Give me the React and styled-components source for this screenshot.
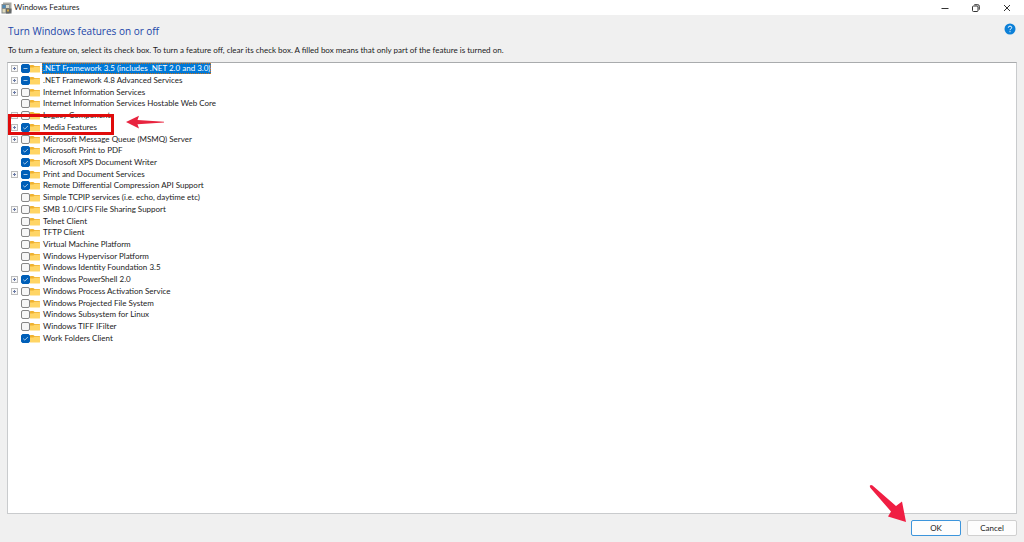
import React, { useEffect, useRef, useState } from "react";
import styled, { createGlobalStyle } from "styled-components";

const features = [
  { name: ".NET Framework 3.5 (includes .NET 2.0 and 3.0)", state: "partial", expandable: true, selected: true },
  { name: ".NET Framework 4.8 Advanced Services", state: "partial", expandable: true },
  { name: "Internet Information Services", state: "off", expandable: true },
  { name: "Internet Information Services Hostable Web Core", state: "off" },
  { name: "Legacy Components", state: "off", expandable: true },
  { name: "Media Features", state: "on", expandable: true, marked: true },
  { name: "Microsoft Message Queue (MSMQ) Server", state: "off", expandable: true },
  { name: "Microsoft Print to PDF", state: "on" },
  { name: "Microsoft XPS Document Writer", state: "on" },
  { name: "Print and Document Services", state: "partial", expandable: true },
  { name: "Remote Differential Compression API Support", state: "on" },
  { name: "Simple TCPIP services (i.e. echo, daytime etc)", state: "off" },
  { name: "SMB 1.0/CIFS File Sharing Support", state: "off", expandable: true },
  { name: "Telnet Client", state: "off" },
  { name: "TFTP Client", state: "off" },
  { name: "Virtual Machine Platform", state: "off" },
  { name: "Windows Hypervisor Platform", state: "off" },
  { name: "Windows Identity Foundation 3.5", state: "off" },
  { name: "Windows PowerShell 2.0", state: "on", expandable: true },
  { name: "Windows Process Activation Service", state: "off", expandable: true },
  { name: "Windows Projected File System", state: "off" },
  { name: "Windows Subsystem for Linux", state: "off" },
  { name: "Windows TIFF IFilter", state: "off" },
  { name: "Work Folders Client", state: "on" },
];

const GlobalStyle = createGlobalStyle`
  * {
    box-sizing: border-box;
  }
  body {
    margin: 0;
    background: #f0f0f0;
    color: #1b1b1b;
    font-family: Lato, "Open Sans", sans-serif;
    font-size: 8px;
  }
  button {
    font: inherit;
    color: inherit;
    padding: 0;
  }
`;

const Window = styled.div`
  display: flex;
  flex-direction: column;
  min-height: 100vh;
`;

const TitleBar = styled.header`
  display: flex;
  align-items: center;
  height: 15px;
  padding: 0 2px 0 1px;
  background: #fff;
`;

const Title = styled.span`
  flex: 1;
  margin-left: 2px;
  line-height: 15px;
`;

const WindowButton = styled.button`
  display: grid;
  place-items: center;
  width: 31px;
  height: 15px;
  border: 0;
  background: none;
`;

const Content = styled.main`
  flex: 1;
  display: flex;
  flex-direction: column;
  padding: 8px 7px 6px;
`;

const Heading = styled.div`
  display: flex;
  justify-content: space-between;
  padding: 0 1px;
`;

const H1 = styled.h1`
  margin: 0;
  font-family: "Open Sans", sans-serif;
  font-size: 10px;
  font-weight: 400;
  line-height: 16px;
  color: #1a45a8;
`;

const HelpButton = styled.button`
  display: grid;
  height: 12px;
  border: 0;
  background: none;
`;

const Intro = styled.p`
  margin: 5px 1px 6px;
  line-height: 12px;
`;

const Panel = styled.section`
  flex: 1;
  padding: 0 3px;
  border: 1px solid #c9cbcd;
  border-top-color: #a9abad;
  background: #fff;
`;

const Tree = styled.ul`
  display: grid;
  grid-auto-rows: 1fr;
  height: 281px;
  margin: 0;
  padding: 0;
  list-style: none;
`;

const Row = styled.li`
  position: relative;
  display: grid;
  grid-template-columns: 10px auto;
  justify-content: start;
  align-items: center;
  min-height: 0;
`;

const Expander = styled.button`
  grid-column: 1;
  display: grid;
  height: 7px;
  border: 0;
  background: none;
`;

const FeatureLabel = styled.label`
  grid-column: 2;
  display: flex;
  align-items: center;
`;

const CheckFrame = styled.span`
  display: grid;
  width: 9px;
  height: 9px;

  > * {
    grid-area: 1 / 1;
  }
  svg {
    pointer-events: none;
  }
`;

const CheckInput = styled.input`
  appearance: none;
  width: 9px;
  height: 9px;
  margin: 0;
  border: 1px solid #868686;
  border-radius: 2px;
  background: #f6f6f6;

  &:checked,
  &:indeterminate {
    border-color: #005fb8;
    background: #005fb8;
  }
`;

const FeatureName = styled.span`
  height: 11px;
  margin-left: 2px;
  padding: 0 1px;
  line-height: 11px;
  white-space: nowrap;
  color: ${(p) => (p.$selected ? "#fff" : "inherit")};
  background: ${(p) => (p.$selected ? "#0078d7" : "none")};
  outline: ${(p) => (p.$selected ? "1px dotted #c8701c" : "none")};
  outline-offset: -1px;
`;

const MarkBox = styled.span`
  position: absolute;
  inset: -8px auto -2px -3px;
  width: 106px;
  border: 3px solid #e00b0b;
  pointer-events: none;
`;

const RowArrow = styled.svg`
  position: absolute;
  left: 115px;
  top: -7px;
  pointer-events: none;
`;

const Footer = styled.footer`
  position: relative;
  display: flex;
  justify-content: flex-end;
  gap: 6px;
  padding-top: 6px;
`;

const DialogButton = styled.button`
  width: 50px;
  height: 16px;
  border: 1px solid ${(p) => (p.$primary ? "#3c95dc" : "#d0d0d0")};
  border-radius: 2px;
  background: #fdfdfd;
  line-height: 14px;
`;

const OkArrow = styled.svg`
  position: absolute;
  right: 109px;
  bottom: 13px;
  pointer-events: none;
`;

const AppIcon = () => (
  <svg width="11" height="12" viewBox="0 0 11 12" aria-hidden="true">
    <rect x="2" y="0.5" width="8.5" height="9" fill="#a9a9a4" />
    <rect x="0.5" y="2" width="8" height="9.5" fill="#858b8b" />
    <rect x="1.5" y="3" width="3" height="3" fill="#4d89b8" />
    <rect x="5" y="3" width="3" height="3" fill="#d9d9cb" />
    <rect x="1.5" y="7" width="3" height="3.5" fill="#ded8ba" />
    <rect x="5" y="6.5" width="5.5" height="5" fill="#65686a" />
    <rect x="6" y="7.5" width="2" height="2" fill="#d7ac43" />
  </svg>
);

const FolderIcon = () => (
  <svg width="10" height="9" viewBox="0 0 10 9" aria-hidden="true">
    <path d="M0 1.6Q0 1 .6 1H3.3L4.6 2.1H9.3Q10 2.1 10 2.8V4H0Z" fill="#efb12f" />
    <path d="M0 3.4H3.3L4.6 2.7H9.4Q10 2.7 10 3.3V7.9Q10 8.5 9.4 8.5H.6Q0 8.5 0 7.9Z" fill="#ffd565" />
  </svg>
);

const Checkbox = ({ state, onChange }) => {
  const ref = useRef(null);

  useEffect(() => {
    ref.current.indeterminate = state === "partial";
  }, [state]);

  return (
    <CheckFrame>
      <CheckInput ref={ref} type="checkbox" checked={state === "on"} onChange={onChange} />
      {state !== "off" && (
        <svg width="9" height="9" viewBox="0 0 9 9" fill="none" stroke="#cfe2f3" strokeWidth="0.8" aria-hidden="true">
          <path d={state === "on" ? "M2.2 4.6 3.8 6.1 6.9 3" : "M2.5 4.5H6.5"} />
        </svg>
      )}
    </CheckFrame>
  );
};

const Feature = ({ feature, onToggle }) => (
  <Row>
    {feature.expandable && (
      <Expander type="button" aria-label={`Expand ${feature.name}`}>
        <svg width="7" height="7" viewBox="0 0 7 7" fill="none">
          <rect x="0.5" y="0.5" width="6" height="6" fill="#f8f8f8" stroke="#bcbcbc" />
          <path d="M2 3.5H5M3.5 2V5" stroke="#6b7ba6" />
        </svg>
      </Expander>
    )}
    <FeatureLabel>
      <Checkbox state={feature.state} onChange={onToggle} />
      <FolderIcon />
      <FeatureName $selected={feature.selected}>{feature.name}</FeatureName>
    </FeatureLabel>
    {feature.marked && (
      <>
        <MarkBox />
        <RowArrow width="38" height="14" viewBox="0 0 38 14" aria-hidden="true">
          <path d="M0 7 13 0.8 11.5 5 38 6.8V7.6L11.5 9.3 13 13.4Z" fill="#e8243f" />
        </RowArrow>
      </>
    )}
  </Row>
);

const App = () => {
  const [list, setList] = useState(features);

  const toggle = (index) =>
    setList(list.map((f, i) => (i === index ? { ...f, state: f.state === "on" ? "off" : "on" } : f)));

  return (
    <Window>
      <GlobalStyle />
      <TitleBar>
        <AppIcon />
        <Title>Windows Features</Title>
        <WindowButton type="button" aria-label="Minimize">
          <svg width="8" height="8" viewBox="0 0 8 8" stroke="#333">
            <path d="M0.5 4.5H7.5" />
          </svg>
        </WindowButton>
        <WindowButton type="button" aria-label="Restore">
          <svg width="8" height="8" viewBox="0 0 8 8" fill="none" stroke="#333">
            <rect x="0.5" y="2" width="5.5" height="5.5" rx="1" />
            <path d="M2.3 0.7H5.8Q7.3 0.7 7.3 2.2V5.7" />
          </svg>
        </WindowButton>
        <WindowButton type="button" aria-label="Close">
          <svg width="8" height="8" viewBox="0 0 8 8" stroke="#333">
            <path d="M1 1 7 7M7 1 1 7" />
          </svg>
        </WindowButton>
      </TitleBar>
      <Content>
        <Heading>
          <H1>Turn Windows features on or off</H1>
          <HelpButton type="button" aria-label="Help">
            <svg width="12" height="12" viewBox="0 0 12 12" fill="none">
              <circle cx="6" cy="6" r="5.5" fill="#0c80d8" />
              <path d="M4.3 4.7Q4.3 3.1 6 3.1T7.7 4.6Q7.7 5.4 6.8 5.9T6 7.2M6 8.2V9.2" stroke="#fff" />
            </svg>
          </HelpButton>
        </Heading>
        <Intro>
          To turn a feature on, select its check box. To turn a feature off, clear its check box. A filled box
          means that only part of the feature is turned on.
        </Intro>
        <Panel>
          <Tree>
            {list.map((feature, i) => (
              <Feature key={feature.name} feature={feature} onToggle={() => toggle(i)} />
            ))}
          </Tree>
        </Panel>
        <Footer>
          <OkArrow width="40" height="40" viewBox="0 0 40 40" aria-hidden="true">
            <path d="M2 2.5Q3 1.5 4.5 2.5L28 23 34 18.5 38 39 20 33.5 23 28.5 2.5 5Q1.5 3.5 2 2.5Z" fill="#f01e43" />
          </OkArrow>
          <DialogButton type="button" $primary>OK</DialogButton>
          <DialogButton type="button">Cancel</DialogButton>
        </Footer>
      </Content>
    </Window>
  );
};

export default App;
